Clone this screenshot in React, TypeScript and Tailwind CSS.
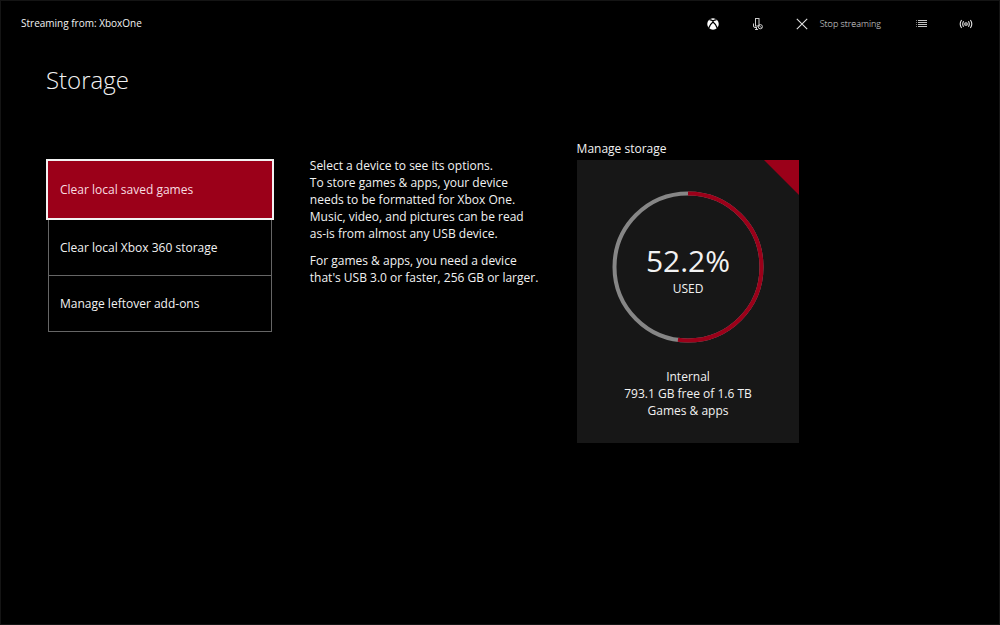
import React from "react";

const USED = 52.2;

function XboxIcon() {
  return (
    <svg viewBox="0 0 24 24" className="size-3" aria-hidden="true">
      <circle cx="12" cy="12" r="11.5" fill="#fff" />
      <path
        d="M5 3.8C8 3.2 10.2 4.6 12 6c1.800-1.400 4-2.800 7-2.200M3.600 20C4.800 15.500 8.500 11 12 8.200c3.500 2.800 7.200 7.300 8.400 11.800"
        fill="none"
        stroke="#000"
        strokeWidth="2.600"
      />
    </svg>
  );
}

function MicIcon() {
  return (
    <svg viewBox="0 0 10 12" className="h-3 w-2.5" fill="none" stroke="#ccc" aria-hidden="true">
      <rect x="2.500" y="0.500" width="3.500" height="7.500" />
      <path d="M0.500 5.500v2.500q0 1.500 1.500 1.500h2M3.500 9.500v2M2 11.500h3" />
      <circle cx="7.300" cy="8.700" r="2.100" />
      <path d="M5.900 7.200l2.900 2.900" strokeWidth="0.800" />
    </svg>
  );
}

function CloseIcon() {
  return (
    <svg viewBox="0 0 12 12" className="size-3" fill="none" stroke="#e0e0e0" strokeWidth="1.100" aria-hidden="true">
      <path d="M0.800 0.800l10.400 10.400M11.200 0.800L0.800 11.200" />
    </svg>
  );
}

function ListIcon() {
  return (
    <svg viewBox="0 0 12 8" className="h-2 w-3" fill="none" shapeRendering="crispEdges" aria-hidden="true">
      <path d="M3 0.500h9M3 2.500h9M3 4.500h9M3 6.500h9" stroke="#c4c4c4" />
      <path d="M1 0.500h1M1 2.500h1M1 4.500h1M1 6.500h1" stroke="#777" />
    </svg>
  );
}

function BroadcastIcon() {
  return (
    <svg viewBox="0 0 14 10" className="h-2.5 w-3.5" fill="none" stroke="#e4e4e4" strokeWidth="1.100" aria-hidden="true">
      <circle cx="7" cy="5" r="1.300" />
      <path d="M4.600 2.200q-1.800 2.800 0 5.600M9.400 2.200q1.800 2.800 0 5.600M2.600 1q-2.800 4 0 8M11.400 1q2.800 4 0 8" />
    </svg>
  );
}

function UsageRing() {
  return (
    <div className="relative grid size-[152px] place-items-center">
      <svg viewBox="0 0 152 152" className="absolute inset-0 size-full -rotate-90" fill="none" strokeWidth="4" aria-hidden="true">
        <circle cx="76" cy="76" r="73.500" stroke="#868686" />
        <circle cx="76" cy="76" r="73.500" stroke="#9b0019" pathLength="100" strokeDasharray={`${USED} 100`} />
      </svg>
      <div className="relative pt-2 text-center">
        <div className="text-[30px] leading-9">{USED}%</div>
        <div className="text-xs leading-5">USED</div>
      </div>
    </div>
  );
}

const otherActions = ["Clear local Xbox 360 storage", "Manage leftover add-ons"];

export default function App() {
  return (
    <div className="min-h-screen border border-[#141414] bg-black font-['Open_Sans','Noto_Sans',sans-serif] text-xs text-[#f2f2f2]">
      <header className="flex h-[46px] items-center justify-between pr-[26px] pl-5">
        <p className="text-[10px]">Streaming from: XboxOne</p>
        <div className="flex items-center">
          <button aria-label="Xbox home" className="mr-[34px]"><XboxIcon /></button>
          <button aria-label="Microphone off" className="mr-[33px]"><MicIcon /></button>
          <button className="mr-[34px] flex items-center gap-3 text-[9px] font-light text-[#e4e4e4]">
            <CloseIcon />
            Stop streaming
          </button>
          <button aria-label="Quality" className="mr-8"><ListIcon /></button>
          <button aria-label="Connection"><BroadcastIcon /></button>
        </div>
      </header>

      <main className="pr-[20%] pl-[45px]">
        <h1 className="pt-[15px] text-2xl leading-9 font-light">Storage</h1>

        <div className="mt-[42px] grid grid-cols-[228fr_231fr_223fr] items-start gap-x-9">
          <nav className="mt-[19px] flex flex-col" aria-label="Storage actions">
            <button className="h-[61px] border-2 border-[#f2f2f2] bg-[#9b0019] px-3 text-left text-[#f8dde0]">
              Clear local saved games
            </button>
            {otherActions.map((label) => (
              <button key={label} className="mx-0.5 h-14 border-x border-b border-[#666] px-[11px] text-left">
                {label}
              </button>
            ))}
          </nav>

          <section className="mt-[17px] flex flex-col gap-2.5 leading-[17px] whitespace-nowrap">
            <p>
              Select a device to see its options.
              <br />
              To store games &amp; apps, your device
              <br />
              needs to be formatted for Xbox One.
              <br />
              Music, video, and pictures can be read
              <br />
              as-is from almost any USB device.
            </p>
            <p>
              For games &amp; apps, you need a device
              <br />
              that's USB 3.0 or faster, 256 GB or larger.
            </p>
          </section>

          <section>
            <h2 className="pb-0.5 leading-[18px]">Manage storage</h2>
            <button className="relative flex w-full flex-col items-center bg-[#171717] pt-[31px] pb-6">
              <svg viewBox="0 0 35 35" className="absolute top-0 right-0 size-[35px]" aria-hidden="true">
                <path d="M0 0H35V35Z" fill="#9b0019" />
              </svg>
              <UsageRing />
              <span className="mt-[25px] block leading-[17px]">Internal</span>
              <span className="block leading-[17px]">793.1 GB free of 1.6 TB</span>
              <span className="block leading-[17px]">Games &amp; apps</span>
            </button>
          </section>
        </div>
      </main>
    </div>
  );
}
